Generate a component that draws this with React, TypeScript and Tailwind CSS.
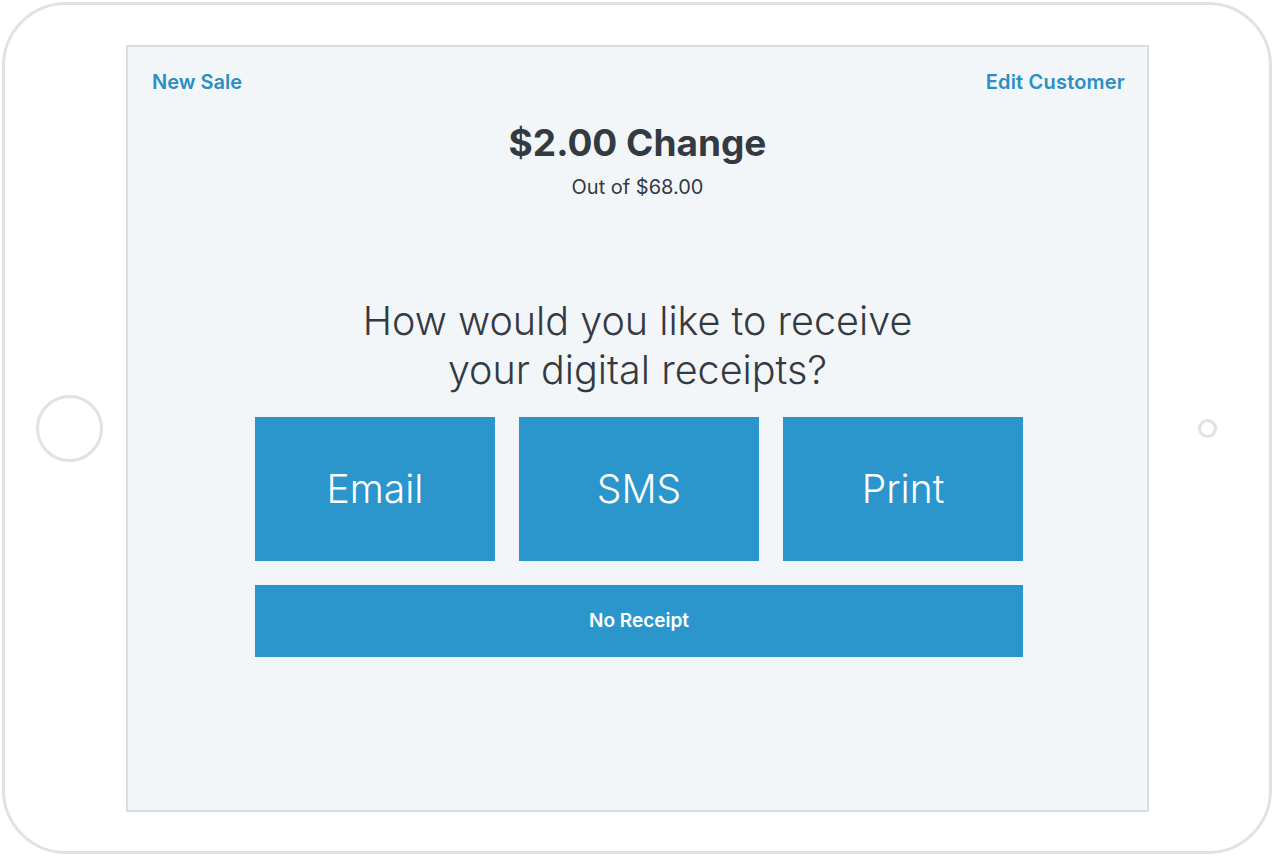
export default function App() {
  const options = ["Email", "SMS", "Print"];

  return (
    <div
      className="w-[1274px] h-[856px] bg-white pt-[2px] pl-[2px]"
      style={{ fontFamily: "Inter, Lato, sans-serif" }}
    >
      <div className="w-[1270px] h-[852px] border-[3px] border-[#e2e2e2] rounded-[64px] flex">
        {/* home button side */}
        <div className="w-[121px] flex items-center justify-center pl-[8px]">
          <div className="w-[67px] h-[67px] rounded-full border-[3px] border-[#e2e2e2]" />
        </div>

        {/* screen */}
        <div className="mt-[40px] w-[1023px] h-[767px] border-2 border-[#dcdcdc] bg-[#f3f6f8] flex flex-col">
          <div className="flex justify-between pl-6 pr-[22px] pt-[22px] text-[20px] leading-[26px] font-semibold text-[#2a8fc4]">
            <span>New Sale</span>
            <span className="tracking-[0.2px]">Edit Customer</span>
          </div>

          <div className="flex flex-col items-center mt-[26px] text-[#333a42]">
            <div className="text-[37px] font-bold leading-[44px]">$2.00 Change</div>
            <div className="text-[20px] leading-[24px] mt-[10px]">Out of $68.00</div>
          </div>

          <div className="mt-[98px] text-center text-[39.5px] font-light leading-[49px] text-[#333a42]">
            How would you like to receive
            <br />
            your digital receipts?
          </div>

          <div className="mt-[22px] ml-[127px] w-[768px] flex flex-col gap-6">
            <div className="flex gap-6">
              {options.map((o) => (
                <div
                  key={o}
                  className="w-[240px] h-[144px] bg-[#2a96cb] flex items-center justify-center text-white text-[39px] font-light"
                >
                  {o}
                </div>
              ))}
            </div>
            <div className="h-[72px] bg-[#2a96cb] flex items-center justify-center text-white text-[19px] font-semibold">
              No Receipt
            </div>
          </div>
        </div>

        {/* camera side */}
        <div className="flex-1 flex items-center justify-center pr-[4px]">
          <div className="w-[19px] h-[19px] rounded-full border-[3px] border-[#e2e2e2]" />
        </div>
      </div>
    </div>
  );
}
